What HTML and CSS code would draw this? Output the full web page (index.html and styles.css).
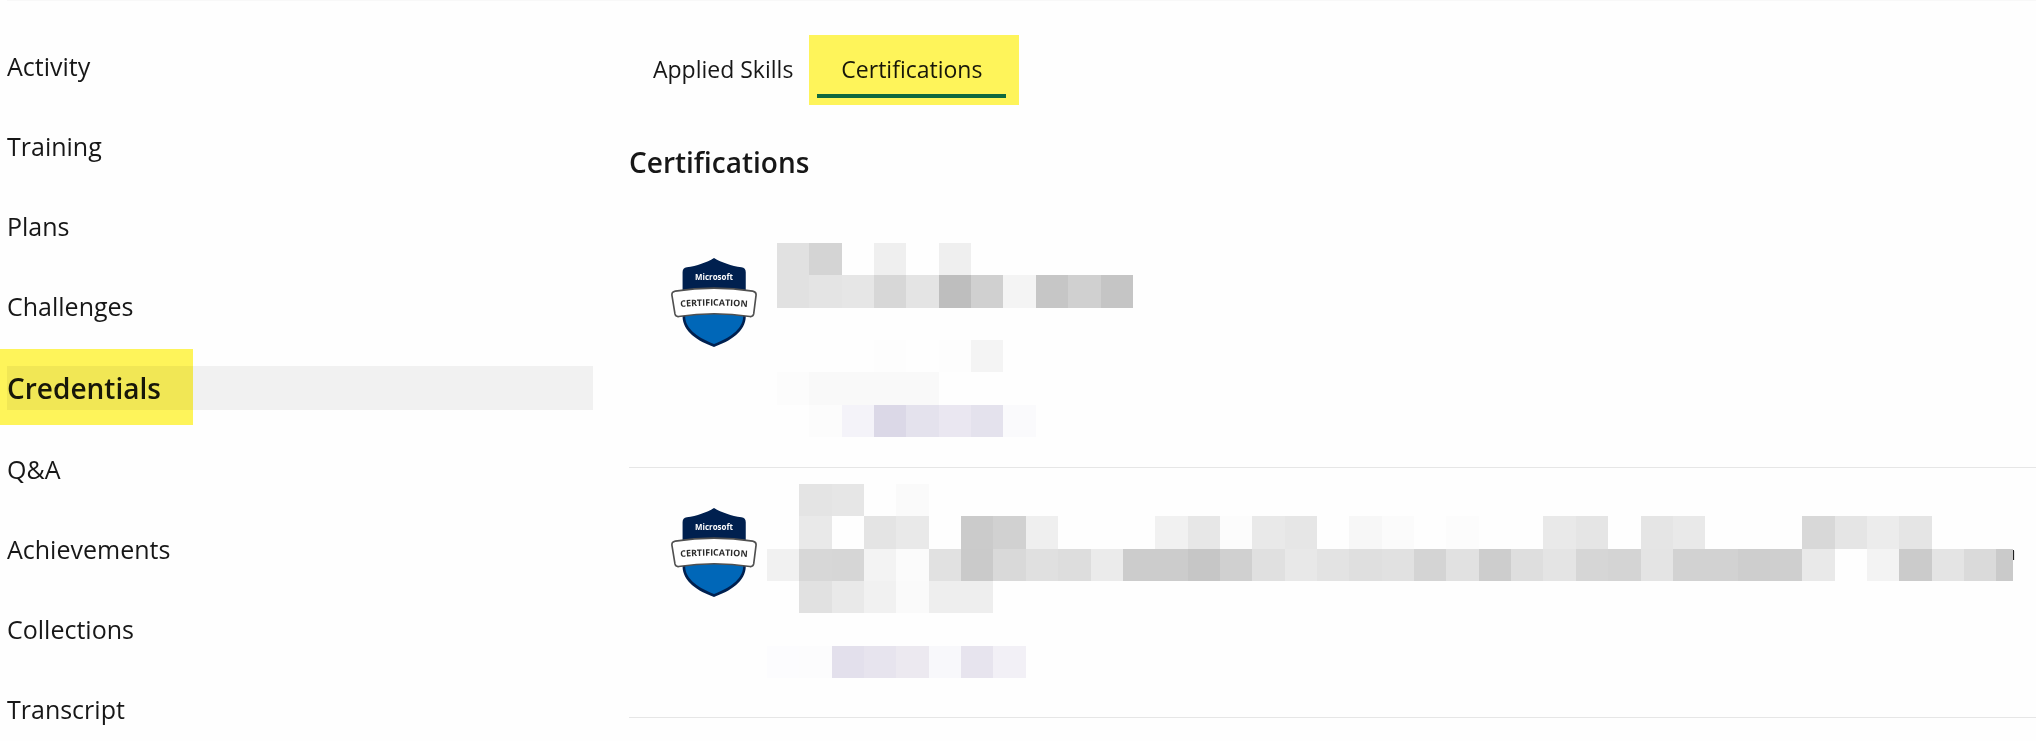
FILE: index.html
```html
<!DOCTYPE html>
<html lang="en">
<head>
  <meta charset="UTF-8">
  <meta name="viewport" content="width=device-width, initial-scale=1">
  <title>Credentials</title>
  <link rel="stylesheet" href="styles.css">
</head>
<body>
  <div class="page">
    <nav class="sidebar">
      <a href="#activity">Activity</a>
      <a href="#training">Training</a>
      <a href="#plans">Plans</a>
      <a href="#challenges">Challenges</a>
      <a href="#credentials" class="selected" aria-current="page">Credentials</a>
      <a href="#qna">Q&amp;A</a>
      <a href="#achievements">Achievements</a>
      <a href="#collections">Collections</a>
      <a href="#transcript">Transcript</a>
    </nav>

    <main class="content">
      <div class="tabs" role="tablist">
        <button class="tab" type="button" role="tab" aria-selected="false">Applied Skills</button>
        <button class="tab active" type="button" role="tab" aria-selected="true">Certifications</button>
      </div>

      <h2>Certifications</h2>

      <article class="card">
        <svg class="badge" viewBox="62 48 260 269">
          <defs>
            <path id="arc" d="M72 198 Q192 186 312 198" />
          </defs>
          <path fill="#00204f" d="M192 48 C215 62 245 72 275 76 Q288 78 288 91 V225 C288 270 240 300 192 317 C144 300 97 270 97 225 V91 Q97 78 110 76 C140 72 170 62 192 48 Z" />
          <path fill="#0067b8" d="M105 216 H280 V228 C278 265 235 292 192 308 C149 292 107 265 105 228 Z" />
          <path fill="#fff" stroke="#505050" stroke-width="5" stroke-linejoin="round" d="M75 148 Q192 130 309 148 Q321 150 319 162 L312 217 Q310 226 301 225 Q192 208 85 225 Q76 226 74 217 L65 162 Q63 150 75 148 Z" />
          <text class="badge-brand" x="192" y="115" text-anchor="middle">Microsoft</text>
          <text class="badge-label" text-anchor="middle"><textPath href="#arc" startOffset="50%">CERTIFICATION</textPath></text>
        </svg>
        <svg class="details" viewBox="0 0 1248 203" shape-rendering="crispEdges" aria-hidden="true">
          <g transform="translate(10 9)">
            <rect x="0" y="0" width="32" height="65" fill="#e1e1e1" />
            <rect x="32" y="0" width="33" height="32" fill="#d4d4d4" />
            <rect x="97" y="0" width="32" height="32" fill="#efefef" />
            <rect x="162" y="0" width="32" height="32" fill="#efefef" />
            <rect x="32" y="32" width="33" height="33" fill="#e4e4e4" />
            <rect x="65" y="32" width="32" height="33" fill="#e6e6e6" />
            <rect x="97" y="32" width="32" height="33" fill="#d7d7d7" />
            <rect x="129" y="32" width="33" height="33" fill="#e4e4e4" />
            <rect x="162" y="32" width="32" height="33" fill="#bebebe" />
            <rect x="194" y="32" width="32" height="33" fill="#d0d0d0" />
            <rect x="226" y="32" width="33" height="33" fill="#f4f4f4" />
            <rect x="259" y="32" width="32" height="33" fill="#c6c6c6" />
            <rect x="291" y="32" width="33" height="33" fill="#d0d0d0" />
            <rect x="324" y="32" width="32" height="33" fill="#c5c5c5" />
            <rect x="97" y="97" width="32" height="32" fill="#fdfdfd" />
            <rect x="162" y="97" width="32" height="32" fill="#fdfdfd" />
            <rect x="194" y="97" width="32" height="32" fill="#f4f4f4" />
            <rect x="0" y="129" width="32" height="33" fill="#fcfcfc" />
            <rect x="32" y="129" width="130" height="33" fill="#f9f9f9" />
            <rect x="32" y="162" width="33" height="32" fill="#fcfcfc" />
            <rect x="65" y="162" width="32" height="32" fill="#f4f3f9" />
            <rect x="97" y="162" width="32" height="32" fill="#dbd8e7" />
            <rect x="129" y="162" width="33" height="32" fill="#e4e2ed" />
            <rect x="162" y="162" width="32" height="32" fill="#eae7f1" />
            <rect x="194" y="162" width="32" height="32" fill="#e4e2ed" />
            <rect x="226" y="162" width="33" height="32" fill="#fafafc" />
          </g>
        </svg>
      </article>

      <article class="card">
        <svg class="badge" viewBox="62 48 260 269">
          <path fill="#00204f" d="M192 48 C215 62 245 72 275 76 Q288 78 288 91 V225 C288 270 240 300 192 317 C144 300 97 270 97 225 V91 Q97 78 110 76 C140 72 170 62 192 48 Z" />
          <path fill="#0067b8" d="M105 216 H280 V228 C278 265 235 292 192 308 C149 292 107 265 105 228 Z" />
          <path fill="#fff" stroke="#505050" stroke-width="5" stroke-linejoin="round" d="M75 148 Q192 130 309 148 Q321 150 319 162 L312 217 Q310 226 301 225 Q192 208 85 225 Q76 226 74 217 L65 162 Q63 150 75 148 Z" />
          <text class="badge-brand" x="192" y="115" text-anchor="middle">Microsoft</text>
          <text class="badge-label" text-anchor="middle"><textPath href="#arc" startOffset="50%">CERTIFICATION</textPath></text>
        </svg>
        <svg class="details" viewBox="0 0 1248 203" shape-rendering="crispEdges" aria-hidden="true">
          <rect x="32" y="0" width="33" height="32" fill="#e4e4e4" />
          <rect x="65" y="0" width="32" height="32" fill="#e6e6e6" />
          <rect x="129" y="0" width="33" height="32" fill="#fafafa" />

          <rect x="32" y="32" width="33" height="33" fill="#e9e9e9" />
          <rect x="97" y="32" width="32" height="33" fill="#e4e4e4" />
          <rect x="129" y="32" width="33" height="33" fill="#e9e9e9" />
          <rect x="194" y="32" width="32" height="33" fill="#cbcbcb" />
          <rect x="226" y="32" width="33" height="33" fill="#d1d1d1" />
          <rect x="259" y="32" width="32" height="33" fill="#efefef" />
          <rect x="388" y="32" width="33" height="33" fill="#f1f1f1" />
          <rect x="421" y="32" width="32" height="33" fill="#e7e7e7" />
          <rect x="453" y="32" width="32" height="33" fill="#fcfcfc" />
          <rect x="485" y="32" width="33" height="33" fill="#e9e9e9" />
          <rect x="518" y="32" width="32" height="33" fill="#e6e6e6" />
          <rect x="582" y="32" width="33" height="33" fill="#f7f7f7" />
          <rect x="615" y="32" width="32" height="33" fill="#fbfbfb" />
          <rect x="679" y="32" width="33" height="33" fill="#fcfcfc" />
          <rect x="776" y="32" width="33" height="33" fill="#e9e9e9" />
          <rect x="809" y="32" width="32" height="33" fill="#e5e5e5" />
          <rect x="874" y="32" width="32" height="33" fill="#e5e5e5" />
          <rect x="906" y="32" width="32" height="33" fill="#e9e9e9" />
          <rect x="1035" y="32" width="33" height="33" fill="#d8d8d8" />
          <rect x="1068" y="32" width="32" height="33" fill="#e5e5e5" />
          <rect x="1100" y="32" width="32" height="33" fill="#ececec" />
          <rect x="1132" y="32" width="33" height="33" fill="#e5e5e5" />

          <rect x="0" y="65" width="32" height="32" fill="#f1f1f1" />
          <rect x="32" y="65" width="33" height="32" fill="#d7d7d7" />
          <rect x="65" y="65" width="32" height="32" fill="#d6d6d6" />
          <rect x="97" y="65" width="32" height="32" fill="#f3f3f3" />
          <rect x="129" y="65" width="33" height="32" fill="#fbfbfb" />
          <rect x="162" y="65" width="32" height="32" fill="#e1e1e1" />
          <rect x="194" y="65" width="32" height="32" fill="#cacaca" />
          <rect x="226" y="65" width="33" height="32" fill="#d9d9d9" />
          <rect x="259" y="65" width="32" height="32" fill="#e0e0e0" />
          <rect x="291" y="65" width="33" height="32" fill="#dddddd" />
          <rect x="324" y="65" width="32" height="32" fill="#ebebeb" />
          <rect x="356" y="65" width="65" height="32" fill="#cccccc" />
          <rect x="421" y="65" width="32" height="32" fill="#c6c6c6" />
          <rect x="453" y="65" width="32" height="32" fill="#d0d0d0" />
          <rect x="485" y="65" width="33" height="32" fill="#e0e0e0" />
          <rect x="518" y="65" width="32" height="32" fill="#e8e8e8" />
          <rect x="550" y="65" width="32" height="32" fill="#e3e3e3" />
          <rect x="582" y="65" width="33" height="32" fill="#dfdfdf" />
          <rect x="615" y="65" width="32" height="32" fill="#e1e1e1" />
          <rect x="647" y="65" width="32" height="32" fill="#d4d4d4" />
          <rect x="679" y="65" width="33" height="32" fill="#e1e1e1" />
          <rect x="712" y="65" width="32" height="32" fill="#cdcdcd" />
          <rect x="744" y="65" width="32" height="32" fill="#dedede" />
          <rect x="776" y="65" width="33" height="32" fill="#e4e4e4" />
          <rect x="809" y="65" width="32" height="32" fill="#d6d6d6" />
          <rect x="841" y="65" width="33" height="32" fill="#d4d4d4" />
          <rect x="874" y="65" width="32" height="32" fill="#e4e4e4" />
          <rect x="906" y="65" width="65" height="32" fill="#d2d2d2" />
          <rect x="971" y="65" width="32" height="32" fill="#cecece" />
          <rect x="1003" y="65" width="32" height="32" fill="#cfcfcf" />
          <rect x="1035" y="65" width="33" height="32" fill="#e9e9e9" />
          <rect x="1100" y="65" width="32" height="32" fill="#f3f3f3" />
          <rect x="1132" y="65" width="33" height="32" fill="#cbcbcb" />
          <rect x="1165" y="65" width="32" height="32" fill="#e4e4e4" />
          <rect x="1197" y="65" width="32" height="32" fill="#dadada" />
          <rect x="1229" y="65" width="17" height="32" fill="#cacaca" />
          <rect x="1246" y="66" width="1" height="10" fill="#222222" />
          <rect x="1247" y="67" width="1" height="9" fill="#e4e4e4" />

          <rect x="32" y="97" width="33" height="32" fill="#e1e1e1" />
          <rect x="65" y="97" width="32" height="32" fill="#e9e9e9" />
          <rect x="97" y="97" width="32" height="32" fill="#f1f1f1" />
          <rect x="129" y="97" width="33" height="32" fill="#fafafa" />
          <rect x="162" y="97" width="64" height="32" fill="#eeeeee" />

          <rect x="0" y="162" width="32" height="32" fill="#fcfcfe" />
          <rect x="32" y="162" width="33" height="32" fill="#fcfcfd" />
          <rect x="65" y="162" width="32" height="32" fill="#e3e0ec" />
          <rect x="97" y="162" width="32" height="32" fill="#e7e4ee" />
          <rect x="129" y="162" width="33" height="32" fill="#ece9f0" />
          <rect x="162" y="162" width="32" height="32" fill="#f8f8fb" />
          <rect x="194" y="162" width="32" height="32" fill="#e7e4ee" />
          <rect x="226" y="162" width="33" height="32" fill="#f2f0f6" />
        </svg>
      </article>
    </main>
  </div>
</body>
</html>
```
FILE: styles.css
```css
* {
  box-sizing: border-box;
}
body {
  margin: 0;
  background-color: #fefefe;
  color: #171717;
  font-family: "Segoe UI", "Open Sans", sans-serif;
}
.page {
  display: flex;
  gap: 36px;
  min-height: 100vh;
  margin-left: 7px;
  border-top: 1px solid #f8f8f8;
}
.sidebar {
  display: flex;
  flex-direction: column;
  gap: 36px;
  flex: 0 0 586px;
  padding-top: 43px;
}
.sidebar a {
  font-size: 25px;
  line-height: 44px;
  color: inherit;
  text-decoration: none;
}
.sidebar .selected {
  position: relative;
  margin: 2px 0 1px;
  background-color: #f1f1f1;
  font-size: 28px;
  font-weight: 600;
}
/* marker highlight */
.selected::after,
.tab.active::after {
  content: "";
  position: absolute;
  background-color: #fff55a;
  mix-blend-mode: multiply;
  pointer-events: none;
}
.selected::after {
  top: -17px;
  bottom: -15px;
  left: -7px;
  width: 193px;
}
.content {
  flex: 1;
  min-width: 0;
  padding-top: 41px;
}
.tabs {
  display: flex;
}
.tab {
  position: relative;
  height: 56px;
  padding: 2px 24px 0;
  border: 0;
  border-bottom: 4px solid transparent;
  background: none;
  color: inherit;
  font-family: inherit;
  font-size: 23px;
}
.tab.active {
  border-bottom-color: #0e6db0;
}
.tab.active::after {
  top: -7px;
  right: -13px;
  bottom: -11px;
  left: -8px;
}
h2 {
  margin: 44px 0 36px;
  font-size: 28px;
  font-weight: 600;
  line-height: 40px;
}
.card {
  display: flex;
  align-items: flex-start;
  gap: 10px;
  padding: 16px 0 30px 42px;
  border-bottom: 1px solid #e6e6e6;
}
.badge {
  flex: none;
  width: 86px;
  height: 89px;
  margin-top: 24px;
}
.badge-brand {
  fill: #fff;
  font-size: 24px;
  font-weight: 700;
}
.badge-label {
  fill: #2b2b2b;
  font-size: 27px;
  font-weight: 700;
}
.details {
  flex: 0 1 1248px;
  min-width: 0;
  height: 203px;
}
```
